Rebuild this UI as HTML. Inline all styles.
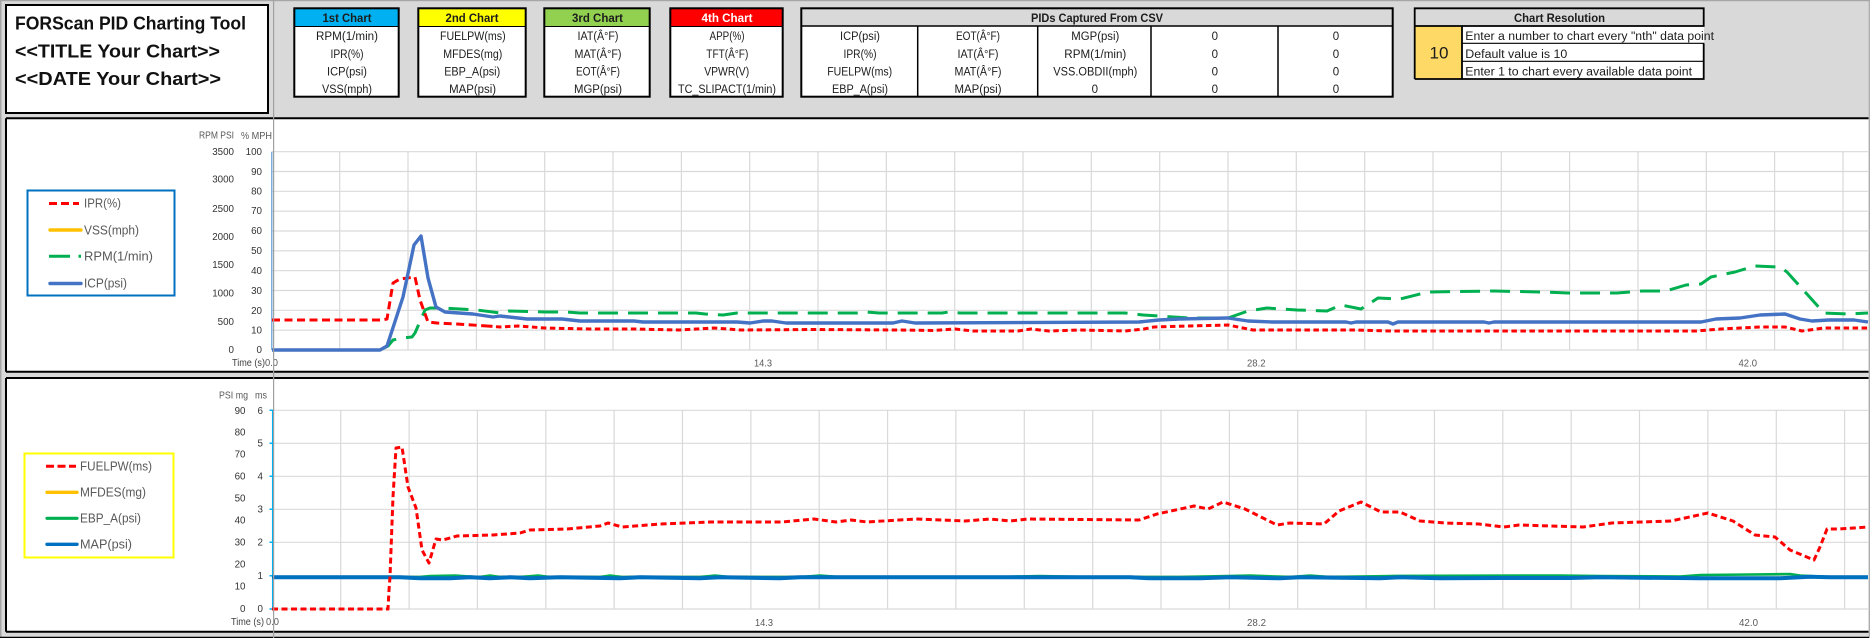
<!DOCTYPE html>
<html>
<head>
<meta charset="utf-8">
<title>FORScan PID Charting Tool</title>
<style>
html,body{margin:0;padding:0;background:#fff;width:1873px;height:638px;overflow:hidden}
svg{display:block}
text{font-family:"Liberation Sans",sans-serif}
.t{font-size:11.5px;fill:#1c1c1c;text-anchor:middle}
.h{font-size:11.5px;font-weight:bold;fill:#1c1c1c;text-anchor:middle}
.l{font-size:11.5px;fill:#1c1c1c}
.ti{font-size:18.3px;font-weight:bold;fill:#111}
.n{font-size:9.8px;fill:#333;text-anchor:end}
.a{font-size:10.4px;fill:#595959}
.g{font-size:13px;fill:#595959}
.grid{stroke:#d9d9d9;stroke-width:1.2;fill:none}
.c{fill:none;stroke-linejoin:round}
</style>
</head>
<body>
<svg xmlns="http://www.w3.org/2000/svg" width="1873" height="638" viewBox="0 0 1873 638">
<rect x="0" y="0" width="1873" height="638" fill="#fff"/>
<rect x="0" y="0" width="1869" height="638" fill="#d9d9d9"/>
<rect x="0" y="0" width="1870" height="1.2" fill="#a6a6a6"/>
<rect x="0" y="0" width="1.5" height="638" fill="#a6a6a6"/>
<rect x="1868.7" y="0" width="1.2" height="638" fill="#a6a6a6"/>

<!-- title -->
<rect x="6" y="5" width="262" height="108" fill="#fff" stroke="#000" stroke-width="2"/>
<text class="ti" x="15" y="29.3" textLength="231" lengthAdjust="spacingAndGlyphs">FORScan PID Charting Tool</text>
<text class="ti" x="15" y="57.3" textLength="205" lengthAdjust="spacingAndGlyphs">&lt;&lt;TITLE Your Chart&gt;&gt;</text>
<text class="ti" x="15" y="85" textLength="206" lengthAdjust="spacingAndGlyphs">&lt;&lt;DATE Your Chart&gt;&gt;</text>

<!-- table 1 -->
<rect x="294.3" y="8.3" width="104.4" height="88.4" fill="#fff"/>
<rect x="294.3" y="8.3" width="104.4" height="18" fill="#00b0f0"/>
<rect x="294.3" y="8.3" width="104.4" height="88.4" fill="none" stroke="#000" stroke-width="2"/>
<path d="M294 26.5H399" stroke="#000" stroke-width="1"/>
<text class="h" x="347" y="22" textLength="49" lengthAdjust="spacingAndGlyphs">1st Chart</text>
<text class="t" x="347" y="40" textLength="62" lengthAdjust="spacingAndGlyphs">RPM(1/min)</text>
<text class="t" x="347" y="58" textLength="33" lengthAdjust="spacingAndGlyphs">IPR(%)</text>
<text class="t" x="347" y="75.3" textLength="40" lengthAdjust="spacingAndGlyphs">ICP(psi)</text>
<text class="t" x="347" y="93" textLength="50" lengthAdjust="spacingAndGlyphs">VSS(mph)</text>

<!-- table 2 -->
<rect x="418.3" y="8.3" width="107.4" height="88.4" fill="#fff"/>
<rect x="418.3" y="8.3" width="107.4" height="18" fill="#ffff00"/>
<rect x="418.3" y="8.3" width="107.4" height="88.4" fill="none" stroke="#000" stroke-width="2"/>
<path d="M418 26.5H526" stroke="#000" stroke-width="1"/>
<text class="h" x="472" y="22" textLength="53" lengthAdjust="spacingAndGlyphs">2nd Chart</text>
<text class="t" x="472.8" y="40" textLength="65.7" lengthAdjust="spacingAndGlyphs">FUELPW(ms)</text>
<text class="t" x="472.8" y="58" textLength="59" lengthAdjust="spacingAndGlyphs">MFDES(mg)</text>
<text class="t" x="472.2" y="75.3" textLength="56" lengthAdjust="spacingAndGlyphs">EBP_A(psi)</text>
<text class="t" x="472.6" y="93" textLength="47" lengthAdjust="spacingAndGlyphs">MAP(psi)</text>

<!-- table 3 -->
<rect x="544.3" y="8.3" width="105.4" height="88.4" fill="#fff"/>
<rect x="544.3" y="8.3" width="105.4" height="18" fill="#92d050"/>
<rect x="544.3" y="8.3" width="105.4" height="88.4" fill="none" stroke="#000" stroke-width="2"/>
<path d="M544 26.5H650" stroke="#000" stroke-width="1"/>
<text class="h" x="597.5" y="22" textLength="51" lengthAdjust="spacingAndGlyphs">3rd Chart</text>
<text class="t" x="598" y="40" textLength="41" lengthAdjust="spacingAndGlyphs">IAT(Â°F)</text>
<text class="t" x="598" y="58" textLength="47" lengthAdjust="spacingAndGlyphs">MAT(Â°F)</text>
<text class="t" x="598" y="75.3" textLength="44" lengthAdjust="spacingAndGlyphs">EOT(Â°F)</text>
<text class="t" x="598" y="93" textLength="48" lengthAdjust="spacingAndGlyphs">MGP(psi)</text>

<!-- table 4 -->
<rect x="670.3" y="8.3" width="112.4" height="88.4" fill="#fff"/>
<rect x="670.3" y="8.3" width="112.4" height="18" fill="#ff0000"/>
<rect x="670.3" y="8.3" width="112.4" height="88.4" fill="none" stroke="#000" stroke-width="2"/>
<path d="M670 26.5H783" stroke="#000" stroke-width="1"/>
<text class="h" x="727" y="22" textLength="51" lengthAdjust="spacingAndGlyphs" style="fill:#fff">4th Chart</text>
<text class="t" x="727" y="40" textLength="35" lengthAdjust="spacingAndGlyphs">APP(%)</text>
<text class="t" x="727.3" y="58" textLength="42" lengthAdjust="spacingAndGlyphs">TFT(Â°F)</text>
<text class="t" x="726.7" y="75.3" textLength="45" lengthAdjust="spacingAndGlyphs">VPWR(V)</text>
<text class="t" x="727" y="93" textLength="98" lengthAdjust="spacingAndGlyphs">TC_SLIPACT(1/min)</text>

<!-- table 5 -->
<rect x="801.3" y="8.3" width="591.4" height="88.4" fill="#fff"/>
<rect x="801.3" y="8.3" width="591.4" height="17.7" fill="#d9d9d9"/>
<rect x="801.3" y="8.3" width="591.4" height="88.4" fill="none" stroke="#000" stroke-width="2"/>
<path d="M801 26H1393" stroke="#000" stroke-width="1.6"/>
<path d="M917.7 26V97M1037.7 26V97M1151 26V97M1278 26V97" stroke="#000" stroke-width="1.5"/>
<text class="h" x="1097" y="22" textLength="132" lengthAdjust="spacingAndGlyphs">PIDs Captured From CSV</text>
<text class="t" x="860" y="40" textLength="40" lengthAdjust="spacingAndGlyphs">ICP(psi)</text>
<text class="t" x="860" y="58" textLength="33" lengthAdjust="spacingAndGlyphs">IPR(%)</text>
<text class="t" x="859.7" y="75.3" textLength="65" lengthAdjust="spacingAndGlyphs">FUELPW(ms)</text>
<text class="t" x="860" y="93" textLength="56" lengthAdjust="spacingAndGlyphs">EBP_A(psi)</text>
<text class="t" x="978" y="40" textLength="44" lengthAdjust="spacingAndGlyphs">EOT(Â°F)</text>
<text class="t" x="978" y="58" textLength="41" lengthAdjust="spacingAndGlyphs">IAT(Â°F)</text>
<text class="t" x="978" y="75.3" textLength="47" lengthAdjust="spacingAndGlyphs">MAT(Â°F)</text>
<text class="t" x="978" y="93" textLength="47" lengthAdjust="spacingAndGlyphs">MAP(psi)</text>
<text class="t" x="1095.3" y="40" textLength="48" lengthAdjust="spacingAndGlyphs">MGP(psi)</text>
<text class="t" x="1095.3" y="58" textLength="62" lengthAdjust="spacingAndGlyphs">RPM(1/min)</text>
<text class="t" x="1095.3" y="75.3" textLength="84" lengthAdjust="spacingAndGlyphs">VSS.OBDII(mph)</text>
<text class="t" x="1094.8" y="93">0</text>
<text class="t" x="1214.8" y="40">0</text>
<text class="t" x="1214.8" y="58">0</text>
<text class="t" x="1214.8" y="75.3">0</text>
<text class="t" x="1214.8" y="93">0</text>
<text class="t" x="1336" y="40">0</text>
<text class="t" x="1336" y="58">0</text>
<text class="t" x="1336" y="75.3">0</text>
<text class="t" x="1336" y="93">0</text>

<!-- table 6 -->
<rect x="1462" y="26" width="242" height="53" fill="#fff"/>
<rect x="1414.7" y="26" width="47.3" height="53" fill="#ffd966"/>
<path d="M1414.7 79V8.3H1703.7V26H1414.7M1414.7 79H1703.7V43.3M1462 26V79" fill="none" stroke="#000" stroke-width="1.8"/>
<path d="M1462 43.3H1704M1462 61.3H1704" fill="none" stroke="#000" stroke-width="1.2"/>
<text class="h" x="1559.5" y="22" textLength="91" lengthAdjust="spacingAndGlyphs">Chart Resolution</text>
<text x="1439" y="58.5" text-anchor="middle" font-size="16.5" fill="#1c1c1c" textLength="19" lengthAdjust="spacingAndGlyphs">10</text>
<text class="l" x="1465.3" y="40" textLength="248.7" lengthAdjust="spacingAndGlyphs">Enter a number to chart every "nth" data point</text>
<text class="l" x="1465.3" y="58" textLength="102" lengthAdjust="spacingAndGlyphs">Default value is 10</text>
<text class="l" x="1465.3" y="75.3" textLength="226.7" lengthAdjust="spacingAndGlyphs">Enter 1 to chart every available data point</text>

<!-- chart 1 -->
<rect x="6" y="118.3" width="1862.5" height="253.5" fill="#fff"/>
<path d="M6 118.3H1868.5M6 118.3V371.7M6 371.7H1868.5" stroke="#000" stroke-width="2" fill="none"/>
<path class="grid" d="M272 151.7H1868M272 171.5H1868M272 191.3H1868M272 211.2H1868M272 231H1868M272 250.8H1868M272 270.7H1868M272 290.5H1868M272 310.3H1868M272 330.2H1868M272 350H1868"/>
<path class="grid" d="M339.7 151.7V350M408 151.7V350M476.4 151.7V350M544.7 151.7V350M613 151.7V350M681.4 151.7V350M749.7 151.7V350M818 151.7V350M886.3 151.7V350M954.7 151.7V350M1023 151.7V350M1091.3 151.7V350M1159.7 151.7V350M1228 151.7V350M1296.3 151.7V350M1364.7 151.7V350M1433 151.7V350M1501.3 151.7V350M1569.6 151.7V350M1638 151.7V350M1706.3 151.7V350M1774.6 151.7V350M1843 151.7V350"/>
<path d="M271.8 151.7V350" stroke="#5b9bd5" stroke-width="1.2"/>

<!-- RPM -->
<polyline class="c" stroke="#00b050" stroke-width="3" stroke-dasharray="20 10" points="380,350 388,346 393,340 402,338 412,337 415,333 425,310 430,308 440,308 460,309 477,310 500,313 509,311 545,312 567,312 580,313 696,313 705,314 723,315 737,313 857,313 866,312 879,313 942,313 949,312 960,313 1125,313 1143,315 1159,316 1189,318 1228,318 1248,311 1267,308 1297,310 1327,311 1341,305 1361,309 1378,298 1400,299 1428,292 1494,291 1543,292 1568,293 1617,293 1642,291 1666,291 1686,285 1701,284 1711,277 1735,272 1755,266 1780,267 1787,272 1824,313 1849,314 1868,313"/>
<!-- IPR -->
<polyline class="c" stroke="#ff0000" stroke-width="3" stroke-dasharray="8 4.5" points="272,320 382,320 387,319 393,283 400,279 415,277 420,300 428,322 437,323 457,324 487,326"/>
<polyline class="c" stroke="#ff0000" stroke-width="3" stroke-dasharray="5.5 3.5" points="487,326 500,327 518,326 545,328 589,329 634,329 679,330 714,328 741,330 812,329.5 897,330 933,330.5 955,329 973,331 1018,331 1031,329 1049,331 1080,330 1125,331 1144,329 1154,327 1189,326 1228,325 1253,330 1297,330 1356,330 1391,331 1696,331 1721,329 1760,327 1785,327 1802,331 1824,328 1868,328"/>
<!-- ICP -->
<polyline class="c" stroke="#4472c4" stroke-width="3.4" points="272,350 380,350 387,346 403,297 414,245 421,236 428,278 436,307 445,312 473,314 493,317 500,316 527,319 562,319 580,321 634,321 643,322 737,322 750,323 763,321 772,321 786,323 893,323 902,321 915,323 1139,322 1159,320 1179,319 1228,318 1248,321 1272,322 1346,322 1351,323 1356,322 1388,322 1393,324 1398,322 1484,322 1489,323 1494,322 1701,322 1716,319 1740,318 1760,315 1785,314 1800,319 1812,321 1829,320 1854,320 1868,322"/>

<text class="a" x="199" y="138.5" textLength="35" lengthAdjust="spacingAndGlyphs">RPM PSI</text>
<text class="a" x="241" y="139" textLength="31" lengthAdjust="spacingAndGlyphs">% MPH</text>
<text class="n" x="234" y="155">3500</text>
<text class="n" x="234" y="182.7">3000</text>
<text class="n" x="234" y="212">2500</text>
<text class="n" x="234" y="240">2000</text>
<text class="n" x="234" y="268">1500</text>
<text class="n" x="234" y="296.7">1000</text>
<text class="n" x="234" y="325">500</text>
<text class="n" x="234" y="353">0</text>
<text class="n" x="262" y="155">100</text>
<text class="n" x="262" y="175">90</text>
<text class="n" x="262" y="194.7">80</text>
<text class="n" x="262" y="214">70</text>
<text class="n" x="262" y="234">60</text>
<text class="n" x="262" y="254">50</text>
<text class="n" x="262" y="274">40</text>
<text class="n" x="262" y="294">30</text>
<text class="n" x="262" y="314">20</text>
<text class="n" x="262" y="333.7">10</text>
<text class="n" x="262" y="353">0</text>
<text class="a" x="232" y="366" textLength="33" lengthAdjust="spacingAndGlyphs" style="fill:#404040">Time (s)</text>
<text class="a" x="265" y="366" textLength="13" lengthAdjust="spacingAndGlyphs">0.0</text>
<text class="a" x="754" y="366.5" textLength="18" lengthAdjust="spacingAndGlyphs">14.3</text>
<text class="a" x="1247" y="366.5" textLength="18.5" lengthAdjust="spacingAndGlyphs">28.2</text>
<text class="a" x="1738.5" y="366.5" textLength="18.5" lengthAdjust="spacingAndGlyphs">42.0</text>

<!-- legend 1 -->
<rect x="27.5" y="190.5" width="147" height="105" fill="#fff" stroke="#0070c0" stroke-width="2"/>
<path d="M49 203.5H79" stroke="#ff0000" stroke-width="3" stroke-dasharray="8 4" fill="none"/>
<path d="M50 230H81" stroke="#ffc000" stroke-width="3.4" stroke-linecap="round" fill="none"/>
<path d="M49 256.3H70M78.5 256.3H81" stroke="#00b050" stroke-width="3" fill="none"/>
<path d="M50 283.5H81" stroke="#4472c4" stroke-width="3.4" stroke-linecap="round" fill="none"/>
<text class="g" x="84" y="207.7" textLength="37" lengthAdjust="spacingAndGlyphs">IPR(%)</text>
<text class="g" x="84" y="234.3" textLength="55" lengthAdjust="spacingAndGlyphs">VSS(mph)</text>
<text class="g" x="84" y="260.3" textLength="69" lengthAdjust="spacingAndGlyphs">RPM(1/min)</text>
<text class="g" x="84" y="287.7" textLength="43" lengthAdjust="spacingAndGlyphs">ICP(psi)</text>

<!-- chart 2 -->
<rect x="6" y="378" width="1862.5" height="253.7" fill="#fff"/>
<path d="M6 378H1868.5M6 378V631.7M6 631.7H1868.5" stroke="#000" stroke-width="2" fill="none"/>
<path d="M0 637.4H1869" stroke="#000" stroke-width="1.2"/>
<path class="grid" d="M272 410.3H1868M272 443.3H1868M272 476.3H1868M272 509.3H1868M272 542.3H1868M272 575.7H1868M272 609H1868"/>
<path class="grid" d="M340.7 410.3V609M409.1 410.3V609M477.4 410.3V609M545.8 410.3V609M614.1 410.3V609M682.5 410.3V609M750.9 410.3V609M819.2 410.3V609M887.6 410.3V609M955.9 410.3V609M1024.3 410.3V609M1092.7 410.3V609M1161 410.3V609M1229.4 410.3V609M1297.7 410.3V609M1366.1 410.3V609M1434.5 410.3V609M1502.8 410.3V609M1571.2 410.3V609M1639.5 410.3V609M1707.9 410.3V609M1776.3 410.3V609M1844.6 410.3V609"/>
<path d="M272.7 410.3V609M269.5 410.3H273M269.5 443.3H273M269.5 476.3H273M269.5 509.3H273M269.5 542.3H273M269.5 575.7H273M269.5 609H273" stroke="#00b0f0" stroke-width="1.5" fill="none"/>

<!-- EBP -->
<polyline class="c" stroke="#00b050" stroke-width="2.6" points="272,577 420,577 430,576 455,575.5 470,576.5 480,577 490,575.5 500,577 520,577 538,575.5 550,577 600,577 610,575.5 622,577 700,577 715,575.5 730,577 800,577 820,575.5 840,577 1000,577 1040,576 1090,577 1180,577 1250,575.5 1290,577 1310,575.5 1330,577 1390,576 1560,575.5 1600,576 1680,576.5 1700,575 1750,574.5 1790,574 1800,575.5 1830,577 1868,577.3"/>
<!-- MAP -->
<polyline class="c" stroke="#0070c0" stroke-width="4" points="272,577.3 400,577.3 420,578.3 450,578.3 470,577.3 490,578.3 510,577.3 530,578.3 560,577.3 620,578.3 640,577.3 700,578.3 720,577.3 780,578.3 800,577.3 1130,577.3 1150,578.3 1200,578.3 1230,577.3 1280,578.3 1300,577.3 1380,578.3 1400,577.3 1440,578.3 1500,578 1570,578 1600,577.3 1700,578.3 1780,578.2 1810,576.8 1830,577.3 1868,577.3"/>
<!-- FUELPW -->
<polyline class="c" stroke="#ff0000" stroke-width="3" stroke-dasharray="6 3.5" points="272,609 388,609 389,590 390,577 393,497 396,448 402,447 408,487 416,508 422,550 429,563 436,539 443,540 457,536 493,535 520,533 530,530 567,529 600,526 608,523 622,527 660,524 710,522 760,522 782,522 814,519 836,522 851,520 867,522 916,519 965,521 990,519 1010,521 1028,519 1139,520 1157,514 1194,506 1208,509 1223,502 1245,509 1277,525 1290,523 1324,524 1339,511 1361,502 1381,512 1400,512 1420,521 1445,523 1479,524 1504,527 1519,525 1583,527 1612,523 1671,521 1708,513 1733,521 1755,535 1775,537 1790,550 1814,560 1820,547 1827,529 1839,529 1868,527"/>

<text class="a" x="219" y="398.5" textLength="29" lengthAdjust="spacingAndGlyphs">PSI mg</text>
<text class="a" x="255" y="398.5" textLength="12" lengthAdjust="spacingAndGlyphs">ms</text>
<text class="n" x="245.5" y="414">90</text>
<text class="n" x="245.5" y="435.6">80</text>
<text class="n" x="245.5" y="457.6">70</text>
<text class="n" x="245.5" y="479.6">60</text>
<text class="n" x="245.5" y="501.6">50</text>
<text class="n" x="245.5" y="523.6">40</text>
<text class="n" x="245.5" y="545.6">30</text>
<text class="n" x="245.5" y="567.6">20</text>
<text class="n" x="245.5" y="589.6">10</text>
<text class="n" x="245.5" y="612">0</text>
<text class="n" x="263" y="414">6</text>
<text class="n" x="263" y="446.7">5</text>
<text class="n" x="263" y="479.7">4</text>
<text class="n" x="263" y="512.7">3</text>
<text class="n" x="263" y="545.7">2</text>
<text class="n" x="263" y="579">1</text>
<text class="n" x="263" y="612">0</text>
<text class="a" x="231" y="625" textLength="33" lengthAdjust="spacingAndGlyphs" style="fill:#404040">Time (s)</text>
<text class="a" x="266" y="625" textLength="13" lengthAdjust="spacingAndGlyphs">0.0</text>
<text class="a" x="755" y="626" textLength="18" lengthAdjust="spacingAndGlyphs">14.3</text>
<text class="a" x="1247" y="626" textLength="19" lengthAdjust="spacingAndGlyphs">28.2</text>
<text class="a" x="1739" y="626" textLength="19" lengthAdjust="spacingAndGlyphs">42.0</text>

<!-- legend 2 -->
<rect x="24.5" y="453.5" width="149" height="104" fill="#fff" stroke="#ffff00" stroke-width="2"/>
<path d="M46 466.3H76" stroke="#ff0000" stroke-width="3" stroke-dasharray="8 3.5" fill="none"/>
<path d="M47 492.3H77" stroke="#ffc000" stroke-width="3.4" stroke-linecap="round" fill="none"/>
<path d="M47 518.3H77" stroke="#00b050" stroke-width="3.2" stroke-linecap="round" fill="none"/>
<path d="M47 544.3H77" stroke="#0070c0" stroke-width="3.4" stroke-linecap="round" fill="none"/>
<text class="g" x="80" y="470.7" textLength="72" lengthAdjust="spacingAndGlyphs">FUELPW(ms)</text>
<text class="g" x="80" y="496.7" textLength="66" lengthAdjust="spacingAndGlyphs">MFDES(mg)</text>
<text class="g" x="80" y="522.7" textLength="61" lengthAdjust="spacingAndGlyphs">EBP_A(psi)</text>
<text class="g" x="80" y="548.7" textLength="52" lengthAdjust="spacingAndGlyphs">MAP(psi)</text>

<!-- freeze pane line -->
<rect x="273" y="0" width="1.2" height="638" fill="#a0a0a0"/>
</svg>
</body>
</html>
